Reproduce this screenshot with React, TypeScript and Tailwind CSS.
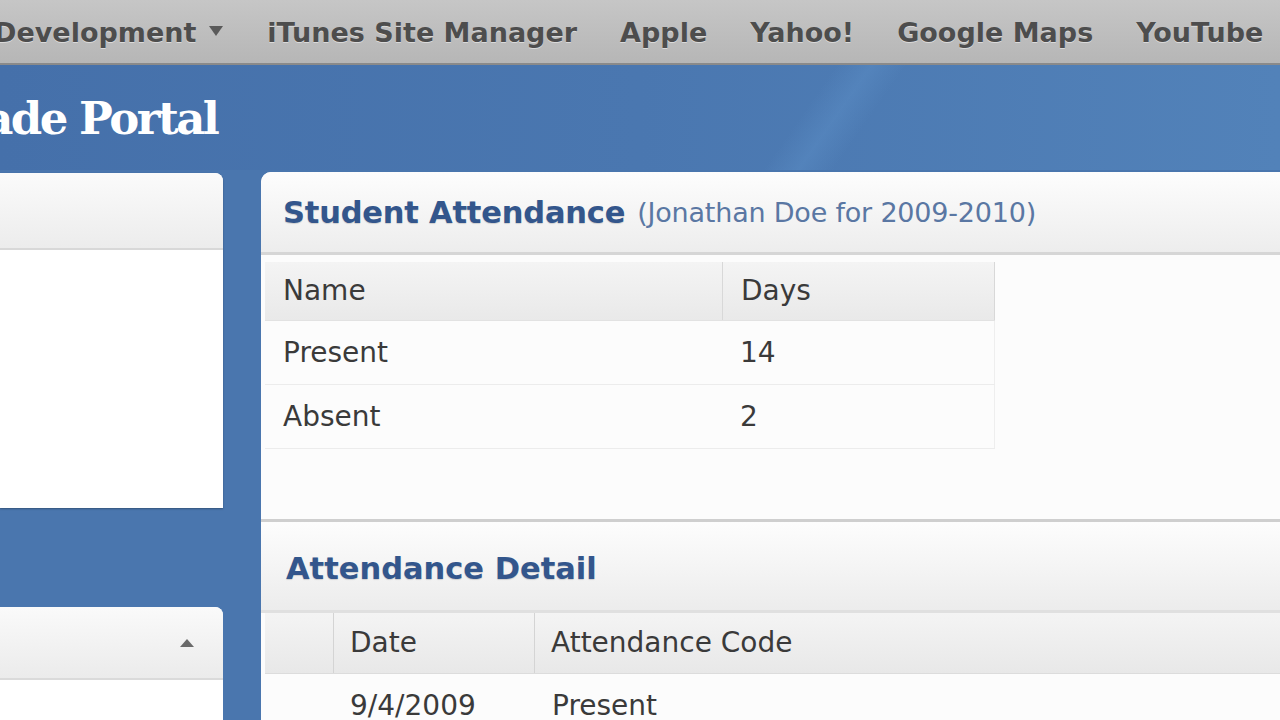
import React from 'react';

const bookmarks = ['iTunes Site Manager', 'Apple', 'Yahoo!', 'Google Maps', 'YouTube'];

const summary = [
  { name: 'Present', days: '14' },
  { name: 'Absent', days: '2' },
];

function BookmarkBar() {
  return (
    <div className="flex h-[65px] shrink-0 items-center gap-[43px] border-b-2 border-[#8a8a8a] bg-gradient-to-b from-[#c6c6c6] to-[#b6b6b6] pt-[3px] font-['DejaVu_Sans',sans-serif] text-[27px] font-bold text-[#4d4d4d] [text-shadow:0_1px_0_#dadada]">
      <span className="-ml-[6px] flex items-center gap-[12px] whitespace-nowrap">
        Development
        <svg width="16" height="12" viewBox="0 0 16 12" className="-mt-[4px]">
          <path d="M1 1h14L8 11z" fill="#5a5a5a" />
        </svg>
      </span>
      {bookmarks.map((b) => (
        <span key={b} className="whitespace-nowrap">
          {b}
        </span>
      ))}
    </div>
  );
}

export default function App() {
  return (
    <div className="flex h-[720px] w-[1280px] flex-col overflow-hidden bg-[#4a76ae]">
      <BookmarkBar />

      <div className="relative flex h-[105px] shrink-0 items-center overflow-hidden bg-gradient-to-r from-[#4570aa] via-[#4a77b0] to-[#5282b9]">
        <div className="absolute left-[800px] top-0 h-full w-[70px] -skew-x-[35deg] bg-gradient-to-r from-transparent via-[#5a8cc4]/50 to-transparent" />
        <h1 className="relative -ml-[73px] mt-[2px] whitespace-nowrap font-['DejaVu_Serif',serif] text-[45px] font-bold tracking-[-2.5px] text-white">
          Grade Portal
        </h1>
      </div>

      <div className="flex flex-1 gap-[38px] pt-[2px]">
        {/* left column */}
        <div className="flex w-[223px] shrink-0 flex-col gap-[99px] pt-[1px]">
          <div className="h-[335px] shrink-0 overflow-hidden rounded-tr-[8px] bg-white shadow-[0_1px_2px_rgba(0,0,0,0.3)]">
            <div className="h-[77px] border-b-2 border-[#d8d8d8] bg-gradient-to-b from-[#fbfbfb] to-[#ececec]" />
          </div>
          <div className="flex-1 overflow-hidden rounded-tr-[8px] bg-white">
            <div className="flex h-[73px] items-center justify-end border-b-2 border-[#dadada] bg-gradient-to-b from-[#fafafa] to-[#ebebeb] pr-[28px]">
              <svg width="16" height="10" viewBox="0 0 16 10">
                <path d="M8 1L15 9H1z" fill="#6a6a6a" />
              </svg>
            </div>
          </div>
        </div>

        {/* right panel */}
        <div className="flex-1 overflow-hidden rounded-tl-[10px] bg-[#fcfcfc] font-['DejaVu_Sans',sans-serif] text-[28px] text-[#3a3a3a]">
          <div className="flex h-[83px] items-center gap-[12px] border-b-[3px] border-[#d6d6d6] bg-gradient-to-b from-[#fdfdfd] to-[#ededed] pl-[22px] pt-[2px]">
            <h2 className="whitespace-nowrap text-[30.5px] font-bold tracking-[-0.2px] text-[#33568c] [text-shadow:0_1px_1px_rgba(0,0,0,0.15)]">
              Student Attendance
            </h2>
            <span className="whitespace-nowrap text-[27px] tracking-[-0.2px] text-[#5a77a3]">(Jonathan Doe for 2009-2010)</span>
          </div>

          <div className="ml-[4px] mt-[7px] h-[257px]">
            <div className="flex w-[730px] border-b border-[#e2e2e2] bg-gradient-to-b from-[#f4f4f4] to-[#e9e9e9]">
              <div className="flex h-[58px] w-[457px] items-center pl-[18px]">Name</div>
              <div className="flex h-[58px] w-[273px] items-center border-x border-[#d8d8d8] pl-[18px]">Days</div>
            </div>
            {summary.map((r) => (
              <div key={r.name} className="flex w-[730px] border-b border-[#ececec]">
                <div className="flex h-[63px] w-[457px] items-center pl-[18px]">{r.name}</div>
                <div className="flex h-[63px] w-[273px] items-center border-r border-[#eeeeee] pl-[18px]">{r.days}</div>
              </div>
            ))}
          </div>

          <div className="flex h-[94px] items-center border-y-[3px] border-t-[#cfcfcf] border-b-[#e0e0e0] bg-gradient-to-b from-[#fdfdfd] to-[#ececec] pl-[25px] pt-[6px]">
            <h2 className="whitespace-nowrap text-[30.5px] font-bold text-[#33568c] [text-shadow:0_1px_1px_rgba(0,0,0,0.15)]">
              Attendance Detail
            </h2>
          </div>

          <div className="ml-[4px] flex border-b border-[#dcdcdc] bg-gradient-to-b from-[#f4f4f4] to-[#e8e8e8]">
            <div className="h-[60px] w-[68px]" />
            <div className="flex h-[60px] w-[202px] items-center border-x border-[#d4d4d4] pl-[16px]">Date</div>
            <div className="flex h-[60px] flex-1 items-center pl-[16px]">Attendance Code</div>
          </div>
          <div className="ml-[4px] flex">
            <div className="h-[64px] w-[68px]" />
            <div className="flex h-[64px] w-[202px] items-center pl-[17px]">9/4/2009</div>
            <div className="flex h-[64px] flex-1 items-center pl-[17px]">Present</div>
          </div>
        </div>
      </div>
    </div>
  );
}
